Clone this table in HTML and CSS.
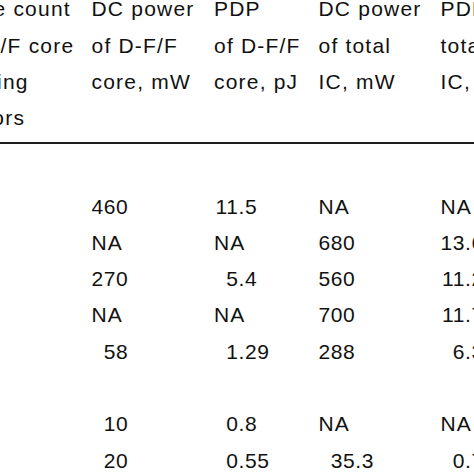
FILE: index.html
```html
<!DOCTYPE html>
<html>
<head>
<meta charset="utf-8">
<link rel="stylesheet" href="styles.css">
</head>
<body>
<div class="table">
  <div class="thead">
    <div class="c">Device count<br>of D-F/F core<br>including<br>resistors</div>
    <div class="c">DC power<br>of D-F/F<br>core, mW</div>
    <div class="c">PDP<br>of D-F/F<br>core, pJ</div>
    <div class="c">DC power<br>of total<br>IC, mW</div>
    <div class="c">PDP of<br>total<br>IC, pJ</div>
  </div>
  <div class="tbody">
    <div class="row">
      <div class="c"></div>
      <div class="c"><span class="num"><span class="i3">460</span></span></div>
      <div class="c"><span class="num"><span class="i2">11</span>.5</span></div>
      <div class="c">NA</div>
      <div class="c">NA</div>
    </div>
    <div class="row">
      <div class="c"></div>
      <div class="c">NA</div>
      <div class="c">NA</div>
      <div class="c"><span class="num"><span class="i3">680</span></span></div>
      <div class="c"><span class="num"><span class="i2">13</span>.6</span></div>
    </div>
    <div class="row">
      <div class="c"></div>
      <div class="c"><span class="num"><span class="i3">270</span></span></div>
      <div class="c"><span class="num"><span class="i2">5</span>.4</span></div>
      <div class="c"><span class="num"><span class="i3">560</span></span></div>
      <div class="c"><span class="num"><span class="i2">11</span>.2</span></div>
    </div>
    <div class="row">
      <div class="c"></div>
      <div class="c">NA</div>
      <div class="c">NA</div>
      <div class="c"><span class="num"><span class="i3">700</span></span></div>
      <div class="c"><span class="num"><span class="i2">11</span>.7</span></div>
    </div>
    <div class="row">
      <div class="c"></div>
      <div class="c"><span class="num"><span class="i3">58</span></span></div>
      <div class="c"><span class="num"><span class="i2">1</span>.29</span></div>
      <div class="c"><span class="num"><span class="i3">288</span></span></div>
      <div class="c"><span class="num"><span class="i2">6</span>.3</span></div>
    </div>
    <div class="row">
      <div class="c"></div>
      <div class="c"></div>
      <div class="c"></div>
      <div class="c"></div>
      <div class="c"></div>
    </div>
    <div class="row">
      <div class="c"></div>
      <div class="c"><span class="num"><span class="i3">10</span></span></div>
      <div class="c"><span class="num"><span class="i2">0</span>.8</span></div>
      <div class="c">NA</div>
      <div class="c">NA</div>
    </div>
    <div class="row">
      <div class="c"></div>
      <div class="c"><span class="num"><span class="i3">20</span></span></div>
      <div class="c"><span class="num"><span class="i2">0</span>.55</span></div>
      <div class="c"><span class="num"><span class="i3">35</span>.3</span></div>
      <div class="c"><span class="num"><span class="i2">0</span>.71</span></div>
    </div>
  </div>
</div>
</body>
</html>
```

FILE: styles.css
```css
html, body {
  margin: 0;
  padding: 0;
  background: #ffffff;
  overflow: hidden;
}

body {
  width: 474px;
  height: 474px;
  font-family: "Liberation Sans", Arial, sans-serif;
  font-size: 21px;
  line-height: 36.3px;
  color: #111111;
  letter-spacing: 1.2px;
}

.table {
  width: 626.5px;
  margin-left: -65px;
  margin-top: -8.7px;
}

.thead,
.row {
  display: grid;
  grid-template-columns: 156.5px 122.5px 104.5px 122px 120px;
}

.thead {
  padding-bottom: 5.5px;
  border-bottom: 2px solid #1e1e1e;
}

.tbody {
  padding-top: 44.6px;
}

.row {
  height: 36.3px;
}

.c {
  white-space: nowrap;
}

.num {
  letter-spacing: 0.6px;
}

.i3 {
  display: inline-block;
  width: calc(3ch + 1.8px);
  text-align: right;
}

.i2 {
  display: inline-block;
  width: calc(2ch + 1.2px);
  text-align: right;
}
```
